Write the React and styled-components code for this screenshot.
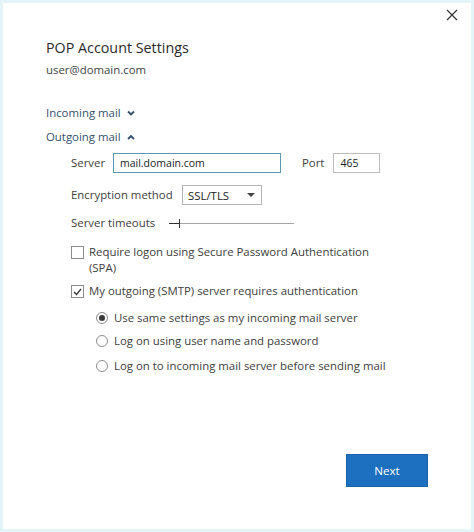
import React from "react";
import styled, { createGlobalStyle } from "styled-components";

const Global = createGlobalStyle`
  html, body { margin: 0; padding: 0; background: #e3f5f9; }
  body { font-family: "Open Sans", "Noto Sans", sans-serif; color: #3a3a3a; }
  * { box-sizing: border-box; }
`;

const Window = styled.div`
  width: 474px;
  height: 532px;
  border: 3px solid #e3f5f9;
  background: #fff;
  display: flex;
  flex-direction: column;
`;

const TopBar = styled.div`
  display: flex;
  justify-content: flex-end;
  height: 26px;
  padding: 6px 13px 0 0;
`;

const CloseButton = styled.button`
  border: none;
  background: none;
  padding: 0;
  width: 12px;
  height: 12px;
  display: flex;
  cursor: pointer;
`;

const Body = styled.div`
  flex: 1;
  display: flex;
  flex-direction: column;
  padding: 8px 0 0 43px;
`;

const Title = styled.h1`
  margin: 0;
  font-size: 14.3px;
  font-weight: 400;
  line-height: 22px;
  color: #2b2b2b;
`;

const Email = styled.div`
  font-size: 11.4px;
  line-height: 20px;
  color: #444;
  margin-top: 1px;
`;

const Section = styled.div`
  display: flex;
  align-items: center;
  gap: 6px;
  font-size: 11.4px;
  line-height: 20px;
  color: #33506e;
  margin-top: ${(p) => p.$mt || 0}px;
`;

const Content = styled.div`
  display: flex;
  flex-direction: column;
  padding-left: 25px;
`;

const Row = styled.div`
  display: flex;
  align-items: center;
  height: 20px;
  margin-top: ${(p) => p.$mt || 0}px;
  font-size: 11.4px;
  color: #404040;
`;

const Label = styled.span`
  width: ${(p) => (p.$w ? p.$w + "px" : "auto")};
  margin-left: ${(p) => p.$ml || 0}px;
  flex-shrink: 0;
  line-height: 20px;
  white-space: nowrap;
`;

const TextBox = styled.div`
  width: ${(p) => p.$w}px;
  height: 20px;
  border: 1px solid ${(p) => (p.$focus ? "#5e97b0" : "#bdbdbd")};
  padding: 0 6px;
  font-size: 10.5px;
  line-height: 18px;
  color: #222;
  margin-left: ${(p) => p.$ml || 0}px;
`;

const Select = styled.div`
  width: 80px;
  height: 20px;
  border: 1px solid #b5b5b5;
  display: flex;
  align-items: center;
  justify-content: space-between;
  padding: 0 6px 0 5px;
  font-size: 11.4px;
  color: #222;
`;

const Slider = styled.div`
  width: 125px;
  height: 9px;
  margin-left: 14px;
  position: relative;
  display: flex;
  align-items: center;
`;

const Track = styled.div`
  flex: 1;
  height: 1px;
  background: #a5a5a5;
`;

const Thumb = styled.div`
  position: absolute;
  left: 10px;
  top: 0;
  width: 1px;
  height: 9px;
  background: #333;
`;

const ThumbLead = styled.div`
  position: absolute;
  left: 0;
  top: 4px;
  width: 10px;
  height: 1px;
  background: #333;
`;

const CheckRow = styled.div`
  display: flex;
  align-items: flex-start;
  gap: ${(p) => (p.$indent ? 6 : 5)}px;
  margin-top: ${(p) => p.$mt || 0}px;
  padding-left: ${(p) => p.$indent || 0}px;
  font-size: 11.4px;
  line-height: 16px;
  color: #404040;
`;

const Box = styled.span`
  width: 13px;
  height: 13px;
  border: 1px solid #8c8c8c;
  background: #fff;
  flex-shrink: 0;
  margin-top: 2px;
  display: flex;
  align-items: center;
  justify-content: center;
`;

const Radio = styled.span`
  width: 12px;
  height: 12px;
  border: 1px solid #8c8c8c;
  border-radius: 50%;
  flex-shrink: 0;
  margin-top: 2px;
  display: flex;
  align-items: center;
  justify-content: center;
  &::after {
    content: "";
    width: 6px;
    height: 6px;
    border-radius: 50%;
    background: ${(p) => (p.$on ? "#3a3a3a" : "transparent")};
  }
`;

const Footer = styled.div`
  margin-top: auto;
  display: flex;
  justify-content: flex-end;
  padding: 0 43px 42px 0;
`;

const NextButton = styled.button`
  width: 82px;
  height: 33px;
  background: #1d6fbf;
  border: 1px solid #1a62aa;
  color: #fff;
  font-family: inherit;
  font-size: 11.6px;
  cursor: pointer;
`;

const Chevron = ({ up }) => (
  <svg width="8" height="6" viewBox="0 0 8 6">
    <path
      d={up ? "M1 5 L4 2 L7 5" : "M1 1.5 L4 4.5 L7 1.5"}
      fill="none"
      stroke="#33506e"
      strokeWidth="1.8"
    />
  </svg>
);

export default function App() {
  return (
    <>
      <Global />
      <Window>
        <TopBar>
          <CloseButton aria-label="Close">
            <svg width="12" height="12" viewBox="0 0 12 12">
              <path d="M1 1 L11 11 M11 1 L1 11" stroke="#333" strokeWidth="1.2" />
            </svg>
          </CloseButton>
        </TopBar>
        <Body>
          <Title>POP Account Settings</Title>
          <Email>user@domain.com</Email>
          <Section $mt={23}>
            Incoming mail <Chevron />
          </Section>
          <Section $mt={4}>
            Outgoing mail <Chevron up />
          </Section>
          <Content>
            <Row $mt={6}>
              <Label $w={42}>Server</Label>
              <TextBox $w={168} $focus>mail.domain.com</TextBox>
              <Label $ml={21}>Port</Label>
              <TextBox $w={47} $ml={9}>465</TextBox>
            </Row>
            <Row $mt={12}>
              <Label $w={111}>Encryption method</Label>
              <Select>
                SSL/TLS
                <svg width="8" height="5" viewBox="0 0 8 5">
                  <path d="M0 0 H8 L4 4 Z" fill="#444" />
                </svg>
              </Select>
            </Row>
            <Row $mt={8}>
              <Label>Server timeouts</Label>
              <Slider>
                <Track />
                <ThumbLead />
                <Thumb />
              </Slider>
            </Row>
            <CheckRow $mt={11}>
              <Box />
              <span>
                Require logon using Secure Password Authentication
                <br />
                (SPA)
              </span>
            </CheckRow>
            <CheckRow $mt={7}>
              <Box>
                <svg width="9" height="8" viewBox="0 0 9 8">
                  <path d="M1 4 L3.5 6.5 L8 1" fill="none" stroke="#333" strokeWidth="1.2" />
                </svg>
              </Box>
              <span>My outgoing (SMTP) server requires authentication</span>
            </CheckRow>
            <CheckRow $mt={11} $indent={25}>
              <Radio $on />
              <span>Use same settings as my incoming mail server</span>
            </CheckRow>
            <CheckRow $mt={7} $indent={25}>
              <Radio />
              <span>Log on using user name and password</span>
            </CheckRow>
            <CheckRow $mt={9} $indent={25}>
              <Radio />
              <span>Log on to incoming mail server before sending mail</span>
            </CheckRow>
          </Content>
          <Footer>
            <NextButton>Next</NextButton>
          </Footer>
        </Body>
      </Window>
    </>
  );
}
